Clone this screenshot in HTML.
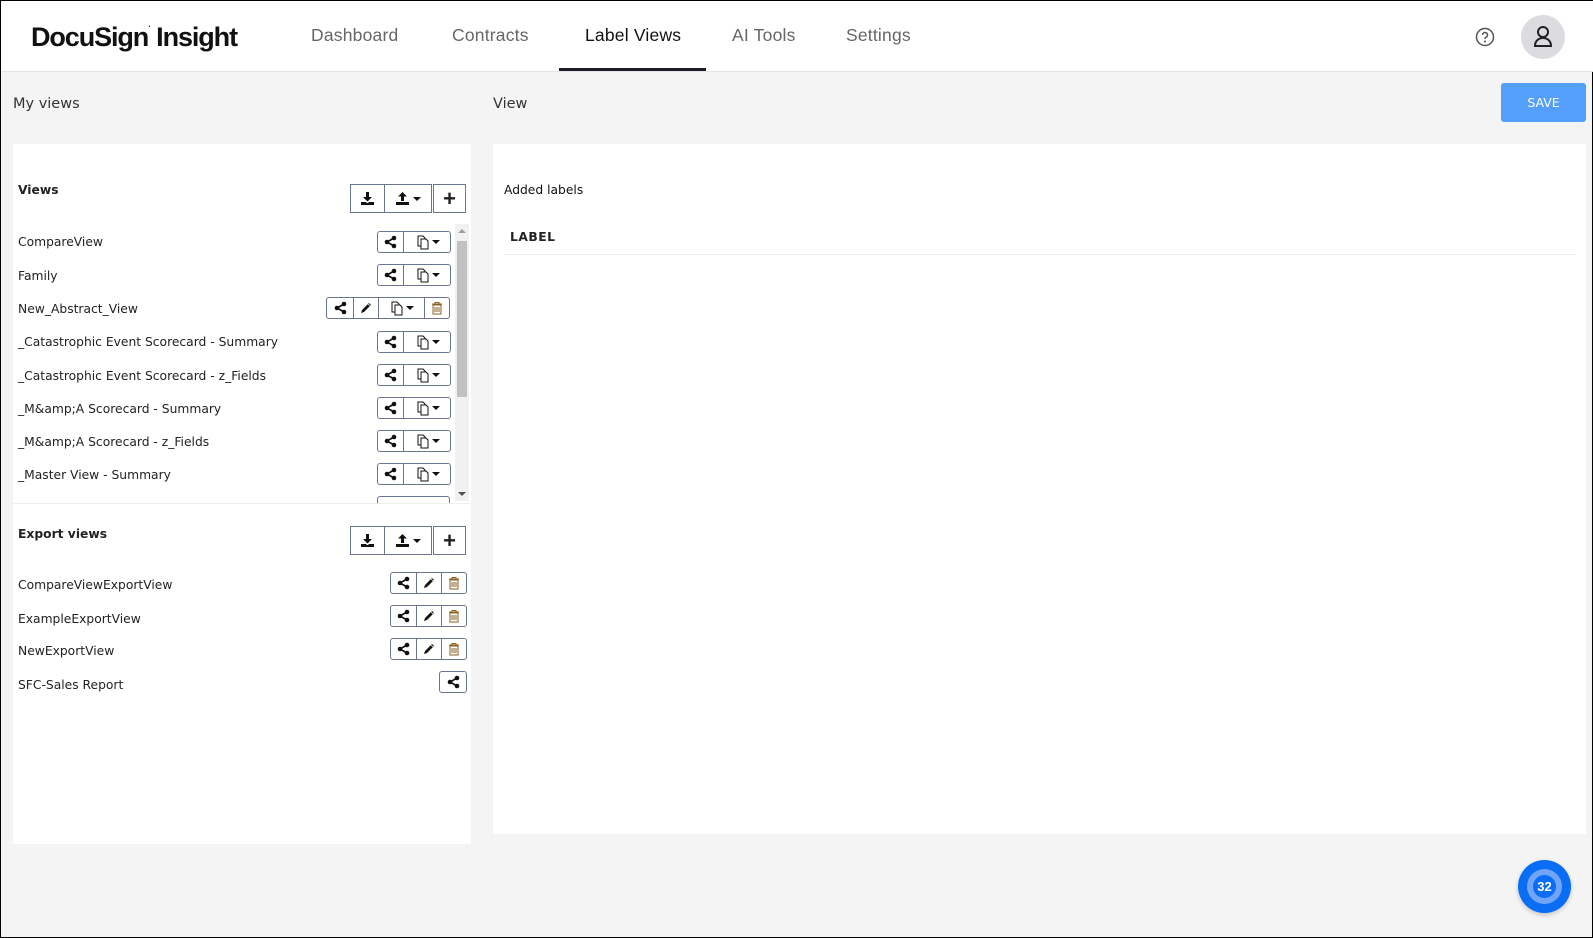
<!DOCTYPE html>
<html><head><meta charset="utf-8"><style>
*{box-sizing:border-box;margin:0;padding:0}
body{width:1593px;height:938px;background:#f4f4f4;font-family:"Liberation Sans","DejaVu Sans",sans-serif;position:relative;overflow:hidden;border:1px solid #000;color:#222}
.abs{position:absolute}
.hdr{left:0;top:0;width:1593px;height:71px;background:#fff;border-bottom:1px solid #e4e4e4}
.logo{left:30px;top:21px;font-size:27px;font-weight:bold;letter-spacing:-1.1px;color:#111}
.nav{top:24px;font-size:17.5px;color:#666;letter-spacing:0.2px}
.t{font-size:12.3px;color:#222;font-family:"DejaVu Sans",sans-serif}
.h{font-size:12.3px;font-weight:bold;color:#222;font-family:"DejaVu Sans",sans-serif}
.grp{position:absolute;display:flex;border:1px solid #6b7590;border-radius:3px;background:#fff;height:22px}
.grp>div{display:flex;align-items:center;justify-content:center;border-left:1px solid #6b7590;height:100%}
.grp>div:first-child{border-left:none}
.big{position:absolute;display:flex;border:1px solid #6b7590;background:#fff;height:29px}
.big>div{display:flex;align-items:center;justify-content:center;border-left:1px solid #6b7590;height:100%}
.big>div:first-child{border-left:none}
.car{display:inline-block;width:0;height:0;border-left:4px solid transparent;border-right:4px solid transparent;border-top:4px solid #111;margin-left:3px}
</style></head><body>
<svg width="0" height="0" style="position:absolute"><defs>
<g id="sh"><circle cx="10" cy="3" r="2.3" fill="#111"/><circle cx="3" cy="7" r="2.3" fill="#111"/><circle cx="10" cy="11" r="2.3" fill="#111"/><path d="M10 3L3 7L10 11" stroke="#111" stroke-width="1.6" fill="none"/></g>
<g id="cp"><path d="M3 1h5l2 2v8H3z" fill="#fff" stroke="#111"/><path d="M6 4h5l2 2v8H6z" fill="#fff" stroke="#111"/></g>
<g id="pe"><path d="M2 12l1-3 7-7 2 2-7 7z" fill="#111"/><path d="M9 3l2 2" stroke="#fff" stroke-width="0.8"/></g>
<g id="tr"><path d="M2 3h10M5 3V1.5h4V3" stroke="#8a6020" fill="none"/><path d="M3 4h8v9H3z" fill="#fff" stroke="#8a6020"/><path d="M5 6v5M7 6v5M9 6v5" stroke="#8a6020"/></g>
<g id="dl"><path d="M6 0h3v5h3l-4.5 4.5L3 5h3z" fill="#111"/><path d="M1 10h5l1 1h1l1-1h5v3H1z" fill="#111"/></g>
<g id="ul"><path d="M6 9h3V4.5h3L7.5 0L3 4.5h3z" fill="#111"/><path d="M1 10h13v3H1z" fill="#111"/></g>
</defs></svg>
<div class="abs hdr"></div>
<div class="abs logo">DocuSign<span style="font-size:8px;vertical-align:top">·</span> Insight</div>
<div class="abs nav" style="left:310px">Dashboard</div>
<div class="abs nav" style="left:451px">Contracts</div>
<div class="abs nav" style="left:584px;color:#111">Label Views</div>
<div class="abs nav" style="left:731px">AI Tools</div>
<div class="abs nav" style="left:845px">Settings</div>
<div class="abs" style="left:558px;top:67px;width:147px;height:3px;background:#1e1e2a"></div>
<svg class="abs" style="left:1474px;top:26px" width="20" height="20" viewBox="0 0 20 20"><circle cx="10" cy="10" r="8.5" fill="none" stroke="#555" stroke-width="1.5"/><path d="M7.5 8a2.5 2.5 0 1 1 3.5 2.3c-.8.4-1 .9-1 1.7" fill="none" stroke="#555" stroke-width="1.5"/><circle cx="10" cy="14.5" r="1" fill="#555"/></svg>
<div class="abs" style="left:1520px;top:14px;width:44px;height:44px;border-radius:50%;background:#dcdce0"></div>
<svg class="abs" style="left:1531px;top:24px" width="22" height="24" viewBox="0 0 22 24"><circle cx="11" cy="7" r="5" fill="none" stroke="#222" stroke-width="2"/><path d="M3 21c0-5 3.5-8 8-8s8 3 8 8z" fill="none" stroke="#222" stroke-width="2"/></svg>
<div class="abs" style="left:12px;top:95px;font-size:14.5px;color:#333;font-family:'DejaVu Sans',sans-serif">My views</div>
<div class="abs" style="left:492px;top:95px;font-size:14.5px;color:#333;font-family:'DejaVu Sans',sans-serif">View</div>
<div class="abs" style="left:1500px;top:82px;width:85px;height:39px;background:#549ff9;border-radius:3px;color:#fff;font-size:12.5px;text-align:center;line-height:39px;font-family:'DejaVu Sans',sans-serif">SAVE</div>

<div class="abs" style="left:12px;top:143px;width:458px;height:700px;background:#fff"></div>
<div class="abs" style="left:492px;top:143px;width:1093px;height:690px;background:#fff"></div>

<div class="abs h" style="left:17px;top:182px">Views</div>
<div class="big" style="left:349px;top:183px"><div style="width:33px"><svg width="15" height="13"><use href="#dl"/></svg></div><div style="width:47px"><svg width="15" height="13"><use href="#ul"/></svg><span class="car"></span></div></div>
<div class="big" style="left:432px;top:183px;width:33px;justify-content:center;align-items:center;font-size:22px;font-weight:bold">+</div>

<div class="abs" style="left:454px;top:223px;width:14px;height:277px;background:#f1f1f1"></div>
<div class="abs" style="left:456px;top:240px;width:10px;height:156px;background:#c1c1c1"></div>
<div class="abs" style="left:457px;top:228px;border-left:4px solid transparent;border-right:4px solid transparent;border-bottom:4px solid #a0a0a0"></div>
<div class="abs" style="left:457px;top:491px;border-left:4px solid transparent;border-right:4px solid transparent;border-top:4px solid #505050"></div>

<div class="abs t" style="left:17px;top:234px">CompareView</div>
<div class="abs t" style="left:17px;top:268px">Family</div>
<div class="abs t" style="left:17px;top:301px">New_Abstract_View</div>
<div class="abs t" style="left:17px;top:334px">_Catastrophic Event Scorecard - Summary</div>
<div class="abs t" style="left:17px;top:368px">_Catastrophic Event Scorecard - z_Fields</div>
<div class="abs t" style="left:17px;top:401px">_M&amp;amp;A Scorecard - Summary</div>
<div class="abs t" style="left:17px;top:434px">_M&amp;amp;A Scorecard - z_Fields</div>
<div class="abs t" style="left:17px;top:467px">_Master View - Summary</div>

<div class="grp" style="left:376px;top:230px"><div style="width:25px"><svg width="13" height="14"><use href="#sh"/></svg></div><div style="width:47px"><svg width="14" height="15"><use href="#cp"/></svg><span class="car"></span></div></div>
<div class="grp" style="left:376px;top:263px"><div style="width:25px"><svg width="13" height="14"><use href="#sh"/></svg></div><div style="width:47px"><svg width="14" height="15"><use href="#cp"/></svg><span class="car"></span></div></div>
<div class="grp" style="left:325px;top:296px"><div style="width:26px"><svg width="13" height="14"><use href="#sh"/></svg></div><div style="width:25px"><svg width="14" height="14"><use href="#pe"/></svg></div><div style="width:46px"><svg width="14" height="15"><use href="#cp"/></svg><span class="car"></span></div><div style="width:25px"><svg width="14" height="14"><use href="#tr"/></svg></div></div>
<div class="grp" style="left:376px;top:330px"><div style="width:25px"><svg width="13" height="14"><use href="#sh"/></svg></div><div style="width:47px"><svg width="14" height="15"><use href="#cp"/></svg><span class="car"></span></div></div>
<div class="grp" style="left:376px;top:363px"><div style="width:25px"><svg width="13" height="14"><use href="#sh"/></svg></div><div style="width:47px"><svg width="14" height="15"><use href="#cp"/></svg><span class="car"></span></div></div>
<div class="grp" style="left:376px;top:396px"><div style="width:25px"><svg width="13" height="14"><use href="#sh"/></svg></div><div style="width:47px"><svg width="14" height="15"><use href="#cp"/></svg><span class="car"></span></div></div>
<div class="grp" style="left:376px;top:429px"><div style="width:25px"><svg width="13" height="14"><use href="#sh"/></svg></div><div style="width:47px"><svg width="14" height="15"><use href="#cp"/></svg><span class="car"></span></div></div>
<div class="grp" style="left:376px;top:462px"><div style="width:25px"><svg width="13" height="14"><use href="#sh"/></svg></div><div style="width:47px"><svg width="14" height="15"><use href="#cp"/></svg><span class="car"></span></div></div>
<div class="abs" style="left:376px;top:495px;width:73px;height:7px;border:1px solid #6b7590;border-bottom:none;border-radius:3px 3px 0 0"></div>
<div class="abs" style="left:12px;top:502px;width:458px;height:1px;background:#eee"></div>

<div class="abs h" style="left:17px;top:526px">Export views</div>
<div class="big" style="left:349px;top:525px"><div style="width:33px"><svg width="15" height="13"><use href="#dl"/></svg></div><div style="width:47px"><svg width="15" height="13"><use href="#ul"/></svg><span class="car"></span></div></div>
<div class="big" style="left:432px;top:525px;width:33px;justify-content:center;align-items:center;font-size:22px;font-weight:bold">+</div>

<div class="abs t" style="left:17px;top:577px">CompareViewExportView</div>
<div class="abs t" style="left:17px;top:611px">ExampleExportView</div>
<div class="abs t" style="left:17px;top:643px">NewExportView</div>
<div class="abs t" style="left:17px;top:677px">SFC-Sales Report</div>
<div class="grp" style="left:389px;top:571px"><div style="width:25px"><svg width="13" height="14"><use href="#sh"/></svg></div><div style="width:25px"><svg width="14" height="14"><use href="#pe"/></svg></div><div style="width:25px"><svg width="14" height="14"><use href="#tr"/></svg></div></div>
<div class="grp" style="left:389px;top:604px"><div style="width:25px"><svg width="13" height="14"><use href="#sh"/></svg></div><div style="width:25px"><svg width="14" height="14"><use href="#pe"/></svg></div><div style="width:25px"><svg width="14" height="14"><use href="#tr"/></svg></div></div>
<div class="grp" style="left:389px;top:637px"><div style="width:25px"><svg width="13" height="14"><use href="#sh"/></svg></div><div style="width:25px"><svg width="14" height="14"><use href="#pe"/></svg></div><div style="width:25px"><svg width="14" height="14"><use href="#tr"/></svg></div></div>
<div class="grp" style="left:438px;top:670px"><div style="width:26px"><svg width="13" height="14"><use href="#sh"/></svg></div></div>

<div class="abs h" style="left:503px;top:182px;font-weight:normal;color:#111">Added labels</div>
<div class="abs h" style="left:509px;top:229px;letter-spacing:0.5px">LABEL</div>
<div class="abs" style="left:503px;top:253px;width:1072px;height:1px;background:#eee"></div>

<div class="abs" style="left:1517px;top:859px;width:53px;height:53px;border-radius:50%;background:#0a6ef5;box-shadow:0 2px 5px rgba(0,0,0,.2)"></div>
<div class="abs" style="left:1526px;top:868px;width:35px;height:35px;border-radius:50%;background:#6fa4f7"></div>
<div class="abs" style="left:1532px;top:874px;width:23px;height:23px;border-radius:50%;background:#0a6ef5;color:#fff;font-size:13px;font-weight:bold;text-align:center;line-height:23px">32</div>
</body></html>
